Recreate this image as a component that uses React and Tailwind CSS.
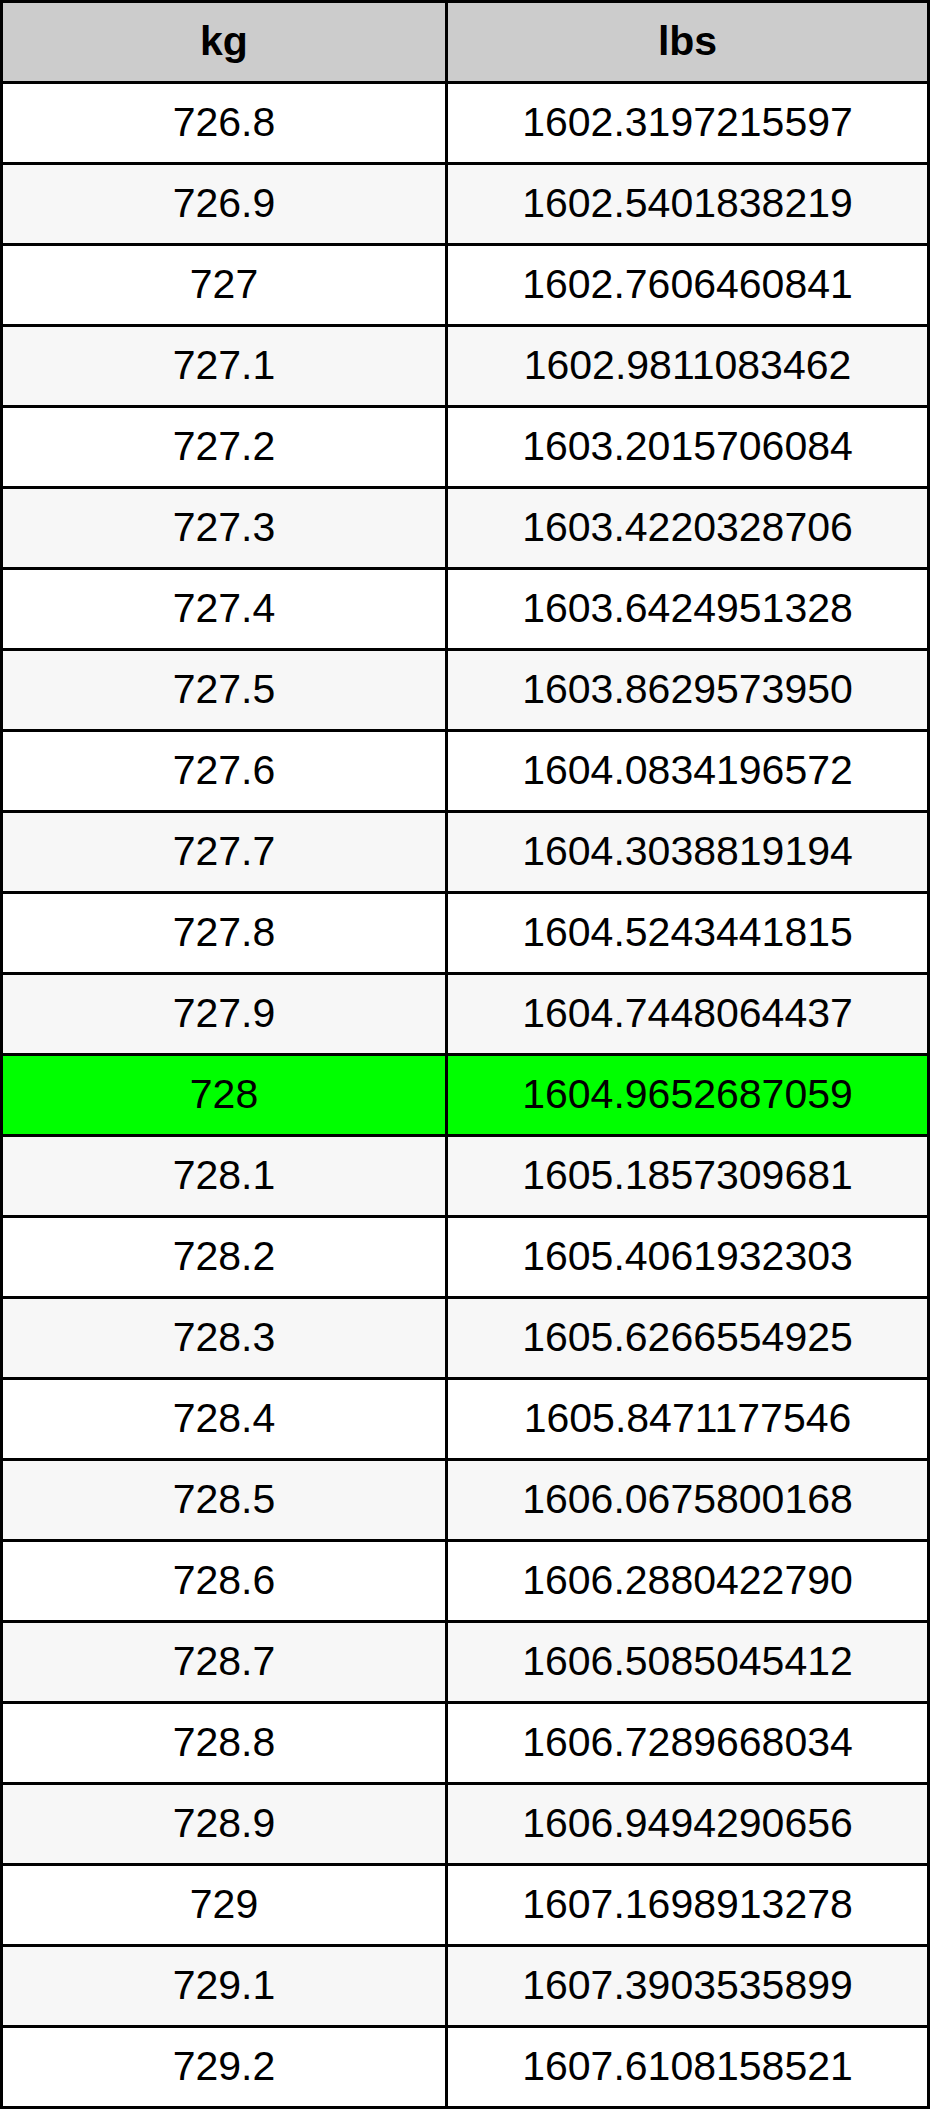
import React from 'react';

const rows = [
  ['726.8', '1602.3197215597'],
  ['726.9', '1602.5401838219'],
  ['727', '1602.7606460841'],
  ['727.1', '1602.9811083462'],
  ['727.2', '1603.2015706084'],
  ['727.3', '1603.4220328706'],
  ['727.4', '1603.6424951328'],
  ['727.5', '1603.8629573950'],
  ['727.6', '1604.0834196572'],
  ['727.7', '1604.3038819194'],
  ['727.8', '1604.5243441815'],
  ['727.9', '1604.7448064437'],
  ['728', '1604.9652687059'],
  ['728.1', '1605.1857309681'],
  ['728.2', '1605.4061932303'],
  ['728.3', '1605.6266554925'],
  ['728.4', '1605.8471177546'],
  ['728.5', '1606.0675800168'],
  ['728.6', '1606.2880422790'],
  ['728.7', '1606.5085045412'],
  ['728.8', '1606.7289668034'],
  ['728.9', '1606.9494290656'],
  ['729', '1607.1698913278'],
  ['729.1', '1607.3903535899'],
  ['729.2', '1607.6108158521'],
];

export default function App() {
  return (
    <div className="w-[930px] bg-white text-black font-['Liberation_Sans',Arial,sans-serif]">
      <div className="border-[3px] border-black">
        <div className="flex h-[81px] border-b-[3px] border-black bg-[#cccccc] text-[41px] font-bold">
          <div className="w-[445px] border-r-[3px] border-black flex items-center justify-center">kg</div>
          <div className="flex-1 flex items-center justify-center">lbs</div>
        </div>
        {rows.map(([kg, lbs], i) => {
          const highlight = kg === '728';
          const bg = highlight ? 'bg-[#00ff00]' : i % 2 === 1 ? 'bg-[#f7f7f7]' : 'bg-white';
          const last = i === rows.length - 1;
          return (
            <div
              key={kg}
              className={`flex text-[41px] ${bg} ${last ? 'h-[78px]' : 'h-[81px] border-b-[3px] border-black'}`}
            >
              <div className="w-[445px] border-r-[3px] border-black flex items-center justify-center">{kg}</div>
              <div className="flex-1 flex items-center justify-center">{lbs}</div>
            </div>
          );
        })}
      </div>
    </div>
  );
}
